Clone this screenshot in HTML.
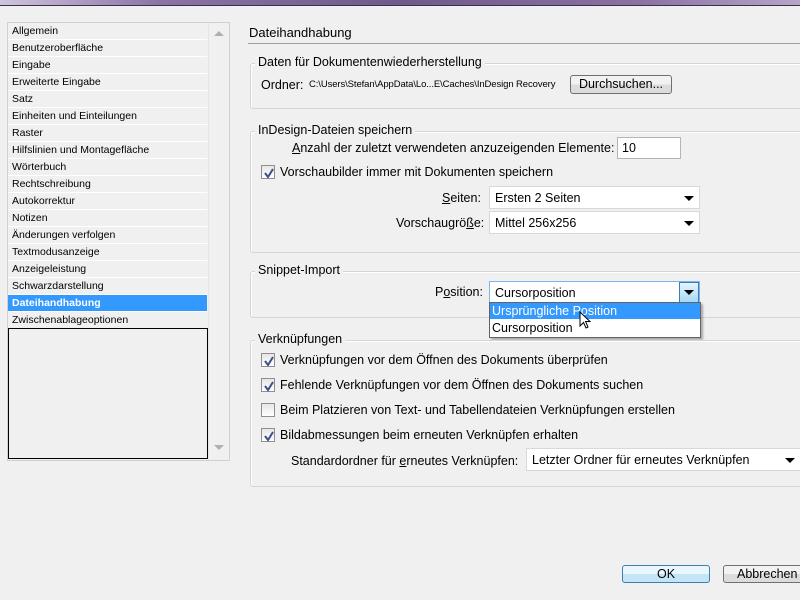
<!DOCTYPE html>
<html><head><meta charset="utf-8"><style>
*{margin:0;padding:0;box-sizing:border-box}
body{width:800px;height:600px;overflow:hidden;background:#f0f0f0;font-family:"Liberation Sans",sans-serif;font-size:12.5px;color:#000;position:relative}
.a{position:absolute;white-space:nowrap}
.top{position:absolute;left:0;top:0;width:800px;height:5px;background:linear-gradient(90deg,#cfc4dc 0,#8a74a6 20%,#6f5a8c 50%,#8a72a3 80%,#b5a6c8 100%)}
.top2{position:absolute;left:0;top:5px;width:800px;height:1px;background:#3d2e4e}
.list{position:absolute;left:7px;top:22px;width:223px;height:439px;border:1px solid #d0d0d0;background:#f0f0f0}
.item{position:absolute;left:0;width:199px;height:17px;border-bottom:1px solid #fff;font-size:10.5px;padding-left:4px;line-height:16px}
.sel{background:#3399ff;color:#fff;font-weight:bold}
.sb{position:absolute;left:200px;top:0;width:21px;height:437px;border-left:1px solid #e4e4e4}
.grp{position:absolute;border:1px solid #d5d5d5;border-radius:3px;box-shadow:inset 1px 1px 0 #fff}
.lg{position:absolute;background:#f0f0f0;padding:0 3px;font-size:12.5px}
.cb{position:absolute;width:14px;height:14px;border:1px solid #8e8f8f;background:linear-gradient(#e6e6e6,#fff)}
.cb svg{position:absolute;left:1px;top:1px}
.dd{position:absolute;background:#fff;border:1px solid #d8d8d8;height:23px;padding-left:5px;line-height:22px}
.dd:after{content:"";position:absolute;right:5px;top:9px;border-left:5px solid transparent;border-right:5px solid transparent;border-top:5px solid #000}
.btn{position:absolute;border:1px solid #707070;border-radius:3px;background:linear-gradient(#f2f2f2 50%,#dcdcdc 50%);text-align:center}
</style></head><body>
<div class="top"></div><div class="top2"></div>

<div class="list">
<div class="item" style="top:0">Allgemein</div>
<div class="item" style="top:17px">Benutzeroberfläche</div>
<div class="item" style="top:34px">Eingabe</div>
<div class="item" style="top:51px">Erweiterte Eingabe</div>
<div class="item" style="top:68px">Satz</div>
<div class="item" style="top:85px">Einheiten und Einteilungen</div>
<div class="item" style="top:102px">Raster</div>
<div class="item" style="top:119px">Hilfslinien und Montagefläche</div>
<div class="item" style="top:136px">Wörterbuch</div>
<div class="item" style="top:153px">Rechtschreibung</div>
<div class="item" style="top:170px">Autokorrektur</div>
<div class="item" style="top:187px">Notizen</div>
<div class="item" style="top:204px">Änderungen verfolgen</div>
<div class="item" style="top:221px">Textmodusanzeige</div>
<div class="item" style="top:238px">Anzeigeleistung</div>
<div class="item" style="top:255px">Schwarzdarstellung</div>
<div class="item sel" style="top:272px">Dateihandhabung</div>
<div class="item" style="top:289px">Zwischenablageoptionen</div>
<div style="position:absolute;left:0;top:305px;width:200px;height:131px;border:1px solid #000"></div>
<div class="sb">
<div style="position:absolute;left:5px;top:8px;border-left:5px solid transparent;border-right:5px solid transparent;border-bottom:5px solid #b0b0b0"></div>
<div style="position:absolute;left:5px;top:422px;border-left:5px solid transparent;border-right:5px solid transparent;border-top:5px solid #b0b0b0"></div>
</div>
</div>

<div class="a" style="left:249px;top:25px;font-size:13px">Dateihandhabung</div>
<div class="a" style="left:248px;top:43px;width:552px;height:1px;background:#a0a0a0"></div>

<div class="grp" style="left:250px;top:63px;width:560px;height:46px"></div>
<div class="lg" style="left:255px;top:55px">Daten für Dokumentenwiederherstellung</div>
<div class="a" style="left:261px;top:78px">Ordner:</div>
<div class="a" style="left:309px;top:79px;font-size:9.5px;letter-spacing:-0.1px">C:\Users\Stefan\AppData\Lo...E\Caches\InDesign Recovery</div>
<div class="btn" style="left:570px;top:75px;width:102px;height:19px;line-height:17px">Durchsuchen...</div>

<div class="grp" style="left:250px;top:131px;width:560px;height:122px"></div>
<div class="lg" style="left:255px;top:123px">InDesign-Dateien speichern</div>
<div class="a" style="left:292px;top:141px"><u>A</u>nzahl der zuletzt verwendeten anzuzeigenden Elemente:</div>
<div class="a" style="left:617px;top:137px;width:64px;height:22px;border:1px solid #b5b5b5;background:#fff;padding:3px 4px">10</div>
<div class="cb" style="left:261px;top:165px"><svg width="12" height="12"><path d="M2 6 L5 10 L10 2" stroke="#3c4e8c" stroke-width="2" fill="none"/></svg></div>
<div class="a" style="left:280px;top:165px">Vorschaubilder immer mit Dokumenten speichern</div>
<div class="a" style="left:442px;top:191px"><u>S</u>eiten:</div>
<div class="dd" style="left:489px;top:186px;width:211px">Ersten 2 Seiten</div>
<div class="a" style="left:396px;top:216px">Vorschaugrö<u>ß</u>e:</div>
<div class="dd" style="left:489px;top:211px;width:211px">Mittel 256x256</div>

<div class="grp" style="left:250px;top:271px;width:560px;height:47px"></div>
<div class="lg" style="left:255px;top:263px">Snippet-Import</div>
<div class="a" style="left:435px;top:285px">P<u>o</u>sition:</div>
<div class="dd" style="left:489px;top:281px;width:211px;border-color:#7eb4ea">Cursorposition</div>
<div class="a" style="left:679px;top:282px;width:20px;height:21px;border:1px solid #3c7fb1;background:linear-gradient(#e5f4fc,#a7d9f5)"><div style="position:absolute;left:4px;top:7px;border-left:5px solid transparent;border-right:5px solid transparent;border-top:5px solid #000"></div></div>
<div class="a" style="left:489px;top:302px;width:212px;height:36px;background:#fff;border:1px solid #646464;box-shadow:2px 2px 2px rgba(0,0,0,.3)">
<div style="position:absolute;left:0;top:0;width:210px;height:16px;background:#3399ff;color:#fff;padding-left:2px;line-height:16px">Ursprüngliche Position</div>
<div style="position:absolute;left:0;top:17px;padding-left:2px;line-height:16px">Cursorposition</div>
</div>
<svg class="a" style="left:579px;top:311px" width="14" height="20"><path d="M1 1 L1 15 L4.5 11.5 L7 17 L9 16 L6.5 10.5 L11 10.5 Z" fill="#fff" stroke="#000" stroke-width="1"/></svg>

<div class="grp" style="left:250px;top:340px;width:560px;height:147px"></div>
<div class="lg" style="left:255px;top:332px">Verknüpfungen</div>
<div class="cb" style="left:261px;top:353px"><svg width="12" height="12"><path d="M2 6 L5 10 L10 2" stroke="#3c4e8c" stroke-width="2" fill="none"/></svg></div>
<div class="a" style="left:280px;top:353px">Verknüpfungen vor dem Öffnen des Dokuments überprüfen</div>
<div class="cb" style="left:261px;top:378px"><svg width="12" height="12"><path d="M2 6 L5 10 L10 2" stroke="#3c4e8c" stroke-width="2" fill="none"/></svg></div>
<div class="a" style="left:280px;top:378px">Fehlende Verknüpfungen vor dem Öffnen des Dokuments suchen</div>
<div class="cb" style="left:261px;top:403px"></div>
<div class="a" style="left:280px;top:403px">Beim Platzieren von Text- und Tabellendateien Verknüpfungen erstellen</div>
<div class="cb" style="left:261px;top:428px"><svg width="12" height="12"><path d="M2 6 L5 10 L10 2" stroke="#3c4e8c" stroke-width="2" fill="none"/></svg></div>
<div class="a" style="left:280px;top:428px">Bildabmessungen beim erneuten Verknüpfen erhalten</div>
<div class="a" style="left:291px;top:454px">Standardordner für <u>e</u>rneutes Verknüpfen:</div>
<div class="dd" style="left:526px;top:448px;width:275px">Letzter Ordner für erneutes Verknüpfen</div>

<div class="btn" style="left:622px;top:565px;width:88px;height:18px;line-height:16px;border-color:#3c7fb1;background:linear-gradient(#eaf6fd 50%,#c4e5f6 50%)">OK</div>
<div class="btn" style="left:723px;top:565px;width:88px;height:18px;line-height:16px;text-align:left;padding-left:13px">Abbrechen</div>
</body></html>
